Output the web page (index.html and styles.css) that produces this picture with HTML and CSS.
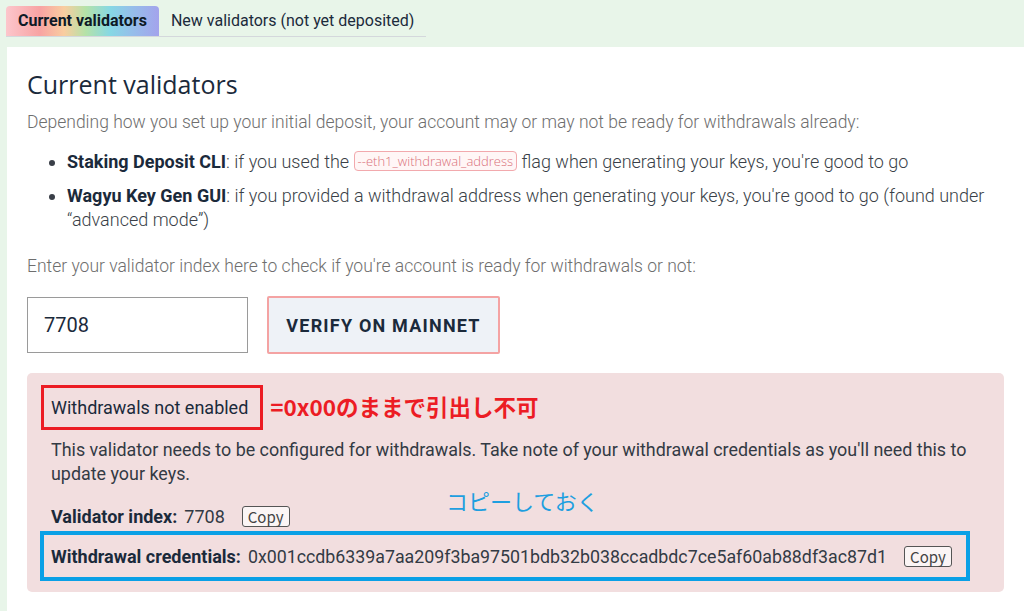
FILE: index.html
```html
<!DOCTYPE html>
<html lang="en">
<head>
<meta charset="utf-8">
<title>Current validators</title>
<link rel="stylesheet" href="styles.css">
</head>
<body>
<div class="tabs">
  <div class="tab tab-active">Current validators</div>
  <div class="tab">New validators (not yet deposited)</div>
</div>
<main class="card">
  <h1 class="title">Current validators</h1>
  <p class="lead">Depending how you set up your initial deposit, your account may or may not be ready for withdrawals already:</p>
  <ul class="options">
    <li><strong>Staking Deposit CLI</strong>: if you used the <code class="flag">--eth1_withdrawal_address</code> flag when generating your keys, you're good to go</li>
    <li><strong>Wagyu Key Gen GUI</strong>: if you provided a withdrawal address when generating your keys, you're good to go (found under “advanced mode”)</li>
  </ul>
  <p class="lead lead-enter">Enter your validator index here to check if you're account is ready for withdrawals or not:</p>
  <div class="verify-row">
    <input class="index-input" type="text" value="7708">
    <button class="verify-btn">VERIFY ON MAINNET</button>
  </div>
  <section class="alert">
    <div class="alert-head">
      <span class="alert-title">Withdrawals not enabled</span>
      <span class="note-red">=0x00のままで引出し不可</span>
    </div>
    <p class="alert-text">This validator needs to be configured for withdrawals. Take note of your withdrawal credentials as you'll need this to update your keys.</p>
    <div class="info-row info-index">
      <strong>Validator index:</strong><span class="val">7708</span><button class="copy">Copy</button>
      <span class="note-blue">コピーしておく</span>
    </div>
    <div class="info-row info-cred">
      <strong>Withdrawal credentials:</strong><span class="val">0x001ccdb6339a7aa209f3ba97501bdb32b038ccadbdc7ce5af60ab88df3ac87d1</span><button class="copy">Copy</button>
    </div>
  </section>
</main>
</body>
</html>
```
FILE: styles.css
```css
html, body {
  margin: 0;
  padding: 0;
}
body {
  background: #e8f5e9;
  font-family: Roboto, "Liberation Sans", sans-serif;
  color: #1b2a3b;
}
.tabs {
  display: flex;
  width: fit-content;
  margin: 6px 0 0 6px;
  border-bottom: 1px solid #d4d8dc;
}
.tab {
  height: 30px;
  line-height: 30px;
  padding: 0 12px;
  font-size: 16px;
  color: #1b2a3b;
}
.tab-active {
  font-weight: 700;
  border-radius: 4px 4px 0 0;
  color: #0e1a26;
  background: linear-gradient(90deg, #fcc6cc 0%, #f8a3a3 22%, #f9cda0 38%, #b5e2a8 52%, #86d8e4 68%, #95bfea 82%, #a3a3ec 100%);
  margin-bottom: -1px;
}
.card {
  background: #fff;
  margin: 10px 0 0 7px;
  padding: 22px 20px 19px 20px;
}
.title {
  font-family: "Open Sans", "Noto Sans", sans-serif;
  font-weight: 500;
  font-size: 25px;
  line-height: 30px;
  margin: 0;
  color: #1b2a3b;
}
.lead {
  font-size: 17.5px;
  font-weight: 300;
  line-height: 24px;
  color: #6e6e6e;
  margin: 11px 0 0;
}
.options {
  margin: 15px 0 0;
  padding-left: 40px;
  font-size: 18px;
  font-weight: 300;
  line-height: 24px;
  color: #3a3f48;
}
.options li + li {
  margin-top: 10px;
}
.options strong {
  font-weight: 700;
  color: #1b2a3b;
}
.flag {
  font-family: "Open Sans", "Noto Sans", sans-serif;
  font-size: 13px;
  color: #d9707a;
  background: #fff6f6;
  border: 1px solid #f2a9ad;
  border-radius: 4px;
  padding: 0 3px;
  vertical-align: 2px;
}
.lead-enter {
  margin-top: 22px;
}
.verify-row {
  display: flex;
  align-items: center;
  gap: 19px;
  margin-top: 18px;
}
.index-input {
  box-sizing: border-box;
  width: 221px;
  height: 56px;
  border: 1px solid #9a9a9a;
  padding: 0 16px;
  font-family: Roboto, "Liberation Sans", sans-serif;
  font-size: 20px;
  color: #1b2a3b;
  outline: none;
  margin: 0;
}
.verify-btn {
  box-sizing: border-box;
  width: 233px;
  height: 58px;
  background: #eef2f7;
  border: 2px solid #f4a3a3;
  border-radius: 2px;
  font-family: Roboto, "Liberation Sans", sans-serif;
  font-weight: 700;
  font-size: 18px;
  letter-spacing: 1.2px;
  color: #1b2a3b;
  margin: 0;
}
.alert {
  position: relative;
  margin-top: 19px;
  background: #f2dedf;
  border-radius: 5px;
  padding: 12px 20px 11px 14px;
  color: #333a44;
}
.alert-head {
  display: flex;
  align-items: center;
  gap: 7px;
}
.alert-title {
  box-sizing: border-box;
  height: 45px;
  display: flex;
  align-items: center;
  border: 3px solid #ec1c24;
  padding: 0 12px 0 7px;
  font-size: 18px;
  color: #1b2a3b;
}
.note-red {
  font-family: "Noto Sans CJK JP", sans-serif;
  font-weight: 700;
  font-size: 22.5px;
  color: #ec1c24;
  margin-top: -4px;
}
.alert-text {
  margin: 8px 0 0 10px;
  font-size: 17.9px;
  line-height: 24px;
  color: #333a44;
}
.info-row {
  display: flex;
  align-items: center;
  font-size: 18px;
  color: #333a44;
  white-space: nowrap;
}
.info-row strong {
  font-weight: 700;
  color: #1b2a3b;
  flex-shrink: 0;
}
.val {
  margin-left: 7px;
}
.info-index {
  position: relative;
  margin: 18px 0 0 10px;
  height: 24px;
}
.info-cred {
  box-sizing: border-box;
  width: 930px;
  height: 50px;
  margin: 3px 0 0 -1px;
  border: 4px solid #0aa0e6;
  padding: 0 11px 0 7px;
}
.info-cred .val {
  margin-left: 7px;
  font-size: 17.8px;
}
.copy {
  font-family: "Noto Sans CJK JP", sans-serif;
  font-size: 15px;
  line-height: 17px;
  height: 21px;
  padding: 0 5px;
  color: #444;
  background: #fbf5f5;
  border: 1px solid #555;
  border-radius: 3px;
  margin: 0 0 0 17px;
  flex-shrink: 0;
}
.note-blue {
  position: absolute;
  left: 395px;
  top: -17px;
  font-family: "Noto Sans CJK JP", sans-serif;
  font-size: 22px;
  line-height: 26px;
  color: #1e9fe0;
}
```
